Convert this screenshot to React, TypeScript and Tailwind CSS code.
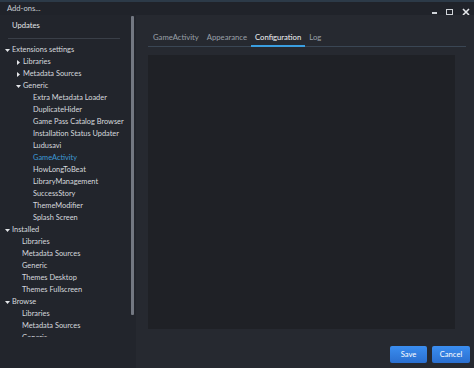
import React from "react";

const Caret = ({ open }: { open: boolean }) => (
  <svg width="5" height="5" viewBox="0 0 5 5" className="shrink-0">
    {open ? <path d="M0 1 L5 1 L2.5 4 Z" fill="#e5e7eb" /> : <path d="M1 0 L4 2.5 L1 5 Z" fill="#e5e7eb" />}
  </svg>
);

type Row = { t: string; lvl: number; caret?: "open" | "closed"; sel?: boolean };

const rows: Row[] = [
  { t: "Extensions settings", lvl: 0, caret: "open" },
  { t: "Libraries", lvl: 1, caret: "closed" },
  { t: "Metadata Sources", lvl: 1, caret: "closed" },
  { t: "Generic", lvl: 1, caret: "open" },
  { t: "Extra Metadata Loader", lvl: 2 },
  { t: "DuplicateHider", lvl: 2 },
  { t: "Game Pass Catalog Browser", lvl: 2 },
  { t: "Installation Status Updater", lvl: 2 },
  { t: "Ludusavi", lvl: 2 },
  { t: "GameActivity", lvl: 2, sel: true },
  { t: "HowLongToBeat", lvl: 2 },
  { t: "LibraryManagement", lvl: 2 },
  { t: "SuccessStory", lvl: 2 },
  { t: "ThemeModifier", lvl: 2 },
  { t: "Splash Screen", lvl: 2 },
  { t: "Installed", lvl: 0, caret: "open" },
  { t: "Libraries", lvl: 1 },
  { t: "Metadata Sources", lvl: 1 },
  { t: "Generic", lvl: 1 },
  { t: "Themes Desktop", lvl: 1 },
  { t: "Themes Fullscreen", lvl: 1 },
  { t: "Browse", lvl: 0, caret: "open" },
  { t: "Libraries", lvl: 1 },
  { t: "Metadata Sources", lvl: 1 },
  { t: "Generic", lvl: 1 },
];

export default function App() {
  return (
    <div
      className="w-[474px] h-[368px] bg-[#262a32] flex flex-col text-[#d6d9de] overflow-hidden"
      style={{ fontFamily: "Lato, 'Noto Sans', sans-serif" }}
    >
      <div className="h-[2px] bg-[#2c3a48]" />
      <div className="h-[13px] flex items-center justify-between pl-[7px] pr-[4px] bg-[#20232a]">
        <span className="text-[7.6px] leading-none text-[#c9cdd3]">Add-ons...</span>
        <div className="flex items-center gap-[9px] pt-[6px]">
          <div className="w-[5px] h-[2px] bg-[#cfd3d8] mt-[3px]" />
          <div className="w-[7px] h-[6px] border-[1.5px] border-[#cfd3d8]" />
          <svg width="8" height="8" viewBox="0 0 8 8">
            <path d="M1 1 L7 7 M7 1 L1 7" stroke="#e5e7eb" strokeWidth="1.6" />
          </svg>
        </div>
      </div>
      <div className="flex flex-1 min-h-0 bg-[#22252c]">
        <div className="w-[136px] flex flex-col">
          <div className="flex flex-1 min-h-0">
            <div className="w-[128px] flex flex-col overflow-hidden">
              <div className="h-[22px] flex items-center pl-[12px] text-[7.6px] text-[#e2e5e9]">Updates</div>
              <div className="mx-[8px] h-px bg-[#3a3f48] mt-[1px]" />
              <div className="flex flex-col pt-[5px] h-[298px] overflow-hidden">
                {rows.map((r, i) => (
                  <div
                    key={i}
                    className={
                      "h-[12px] shrink-0 flex items-center gap-[2px] text-[7.4px] leading-none whitespace-nowrap " +
                      (r.lvl === 0 ? "pl-[5px]" : r.lvl === 1 ? (r.caret ? "pl-[16px]" : "pl-[22px]") : "pl-[33px]") +
                      (r.sel ? " text-[#3d9ad6]" : " text-[#d6d9de]")
                    }
                  >
                    {r.caret && <Caret open={r.caret === "open"} />}
                    <span>{r.t}</span>
                  </div>
                ))}
              </div>
            </div>
            <div className="w-[8px] flex justify-center pt-[1px]">
              <div className="w-[3px] h-[299px] bg-[#737882] rounded-[1px]" />
            </div>
          </div>
        </div>
        <div className="flex-1 flex flex-col bg-[#262930] pl-[12px] pr-[8px]">
          <div className="flex items-end h-[32px] border-b border-[#3a4654] text-[7.7px] leading-none pl-[1px]">
            <div className="px-[4px] pb-[4px] text-[#9aa0a8]">GameActivity</div>
            <div className="px-[4px] pb-[4px] text-[#9aa0a8]">Appearance</div>
            <div className="px-[4px] pb-[3px] text-[#f1f3f5] border-b-2 border-[#3a9ee0] mb-[-1px]">Configuration</div>
            <div className="px-[4px] pb-[4px] text-[#9aa0a8]">Log</div>
          </div>
          <div className="mt-[8px] h-[274px] mr-[11px] bg-[#1f2126]" />
          <div className="flex-1 flex justify-end items-start pt-[17px] gap-[5px] mr-[-4px]">
            <button className="w-[37px] h-[17px] rounded-[2px] bg-gradient-to-b from-[#3b8ef0] to-[#2a6fd0] text-white text-[7.6px]">Save</button>
            <button className="w-[38px] h-[17px] rounded-[2px] bg-gradient-to-b from-[#3b8ef0] to-[#2a6fd0] text-white text-[7.6px]">Cancel</button>
          </div>
        </div>
      </div>
    </div>
  );
}
